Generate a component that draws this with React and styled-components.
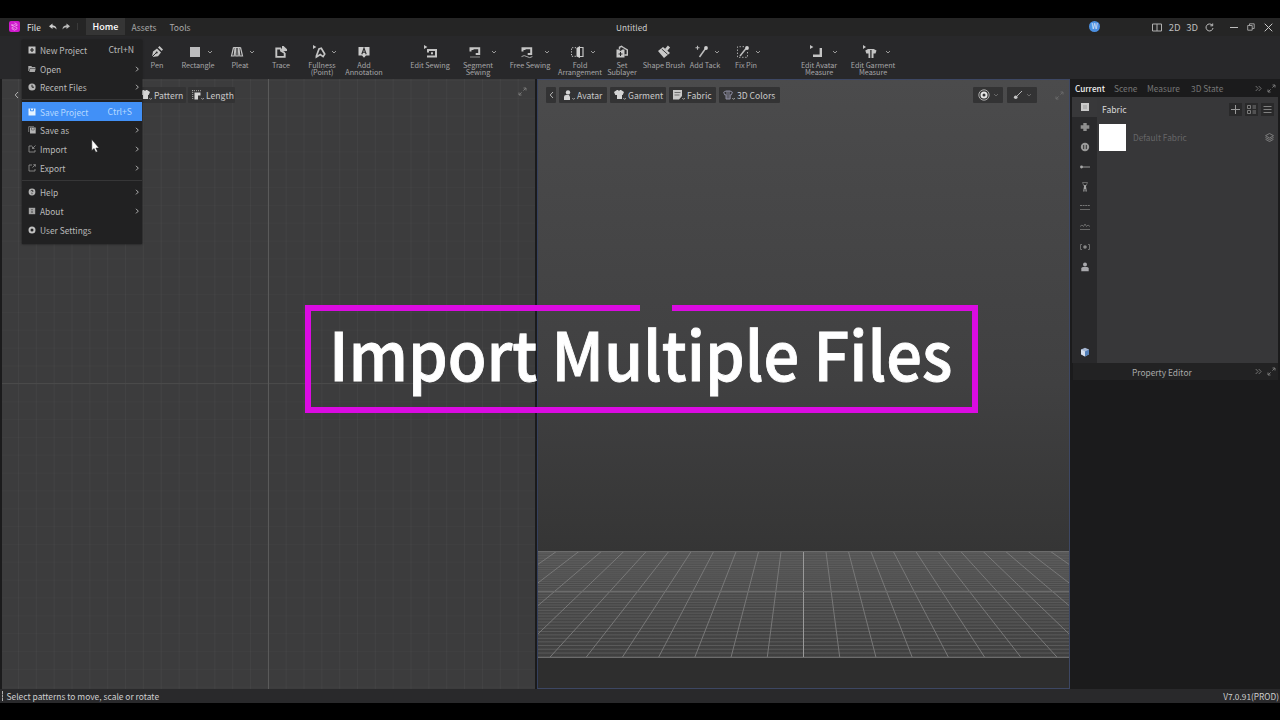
import React from "react";
import styled, { createGlobalStyle } from "styled-components";

const Global = createGlobalStyle`
  * { box-sizing: border-box; }
  body { margin: 0; background: #000; }
`;

const Screen = styled.div`
  position: relative;
  width: 1280px;
  height: 720px;
  overflow: hidden;
  padding: 18px 0 17px;
  background: #000;
  color: #c4c4c4;
  font-family: "Noto Sans CJK SC", "Open Sans", sans-serif;
  font-size: 8.3px;
  line-height: 10px;
  white-space: nowrap;
`;

const Window = styled.div`
  height: 685px;
  display: flex;
  flex-direction: column;
  background: #1b1b1c;
`;

/* ---------- title bar ---------- */

const TitleBar = styled.header`
  position: relative;
  height: 18px;
  flex: none;
  display: flex;
  align-items: center;
  background: #252525;
  padding: 0 0 1px 9px;
`;

const FileLabel = styled.span`
  margin: 0 8px 0 7px;
  width: 14px;
  color: #e0e0e0;
`;

const HistoryButtons = styled.div`
  display: flex;
  gap: 5px;
  width: 29px;
  border-right: 1px solid #3a3a3a;
  height: 7px;
  align-items: center;
`;

const MainTab = styled.div`
  display: flex;
  align-items: center;
  justify-content: center;
  height: 17px;
  width: ${(p) => p.$w}px;
  color: ${(p) => (p.$active ? "#fff" : "#a8a8a8")};
  background: ${(p) => (p.$active ? "#353535" : "transparent")};
  font-size: ${(p) => (p.$active ? 9 : 8.5)}px;
  font-weight: ${(p) => (p.$active ? 500 : 400)};
`;

const DocTitle = styled.div`
  margin-left: 419px;
  width: 34px;
  font-size: 8.2px;
  color: #cfcfcf;
`;

const UserBadge = styled.div`
  margin-left: 439px;
  width: 11px;
  height: 11px;
  border-radius: 50%;
  background: #4b8fe0;
  color: #e6f0ff;
  font-size: 7px;
  text-align: center;
  line-height: 11px;
`;

const WindowTools = styled.div`
  display: flex;
  align-items: center;
  margin-left: auto;
  padding: 1px 7px 0 0;
  color: #bdbdbd;
  font-size: 9.5px;
`;

const ToolSlot = styled.span`
  display: flex;
  justify-content: center;
  width: ${(p) => p.$w || 17.5}px;
`;

/* ---------- ribbon ---------- */

const Ribbon = styled.div`
  height: 43px;
  flex: none;
  display: flex;
  background: #28282a;
  padding: 9px 0 0 137px;
`;

const Tool = styled.div`
  width: 40px;
  flex: none;
  margin-left: ${(p) => p.$gap || 0}px;
  display: flex;
  flex-direction: column;
  align-items: center;
`;

const ToolIcons = styled.div`
  width: 40px;
  height: 14px;
  display: flex;
  align-items: center;
  gap: ${(p) => p.$space || 5}px;
  padding-left: ${(p) => (p.$menu ? 10 : 13)}px;
`;

const ToolLabel = styled.div`
  margin-top: 1px;
  color: #a6a6a8;
  font-size: 7.3px;
  line-height: 7.4px;
  letter-spacing: -0.05px;
  text-align: center;
  white-space: pre;
  padding-top: 2px;
`;

/* ---------- work area ---------- */

const Work = styled.div`
  flex: 1;
  min-height: 0;
  display: flex;
`;

const Pattern2D = styled.section`
  position: relative;
  margin-left: 2px;
  width: 533px;
  display: flex;
  justify-content: space-between;
  align-items: flex-start;
  background:
    linear-gradient(#5a5a5a 0 0) 266px 0 / 1px 100% no-repeat,
    linear-gradient(#4a4a4a 0 0) 0 304px / 100% 1px no-repeat,
    linear-gradient(90deg, #ffffff08 1px, transparent 1px) 16px 0 / 17.85px 100%,
    linear-gradient(#ffffff04 1px, transparent 1px) 0 1px / 100% 17.85px,
    #3c3c3d;
  padding: 8px 8px 0 12px;
`;

const View3D = styled.section`
  margin-left: 2px;
  width: 533px;
  display: flex;
  flex-direction: column;
  border: 1px solid #3d4763;
  border-left-color: #34405e;
  background: linear-gradient(#4b4b4c 0, #404041 50%, #353535 472px, #2e2e2e 560px);
`;

const ViewTop = styled.div`
  height: 471px;
  display: flex;
  align-items: flex-start;
  padding: 7px 5px 0 8px;
`;

const Chips = styled.div`
  display: flex;
  gap: ${(p) => p.$gap}px;
  align-items: center;
`;

const Chip = styled.div`
  width: ${(p) => p.$w}px;
  height: 16px;
  display: flex;
  align-items: center;
  justify-content: ${(p) => (p.$center ? "center" : "flex-start")};
  gap: ${(p) => (p.$center ? 3 : 1)}px;
  padding-left: ${(p) => (p.$center ? 0 : p.$inset ?? 4)}px;
  background: ${(p) => (p.$plain ? "transparent" : "#333334")};
  color: #cacaca;
  font-size: 8.6px;
  border-radius: 1px;
`;

const Floor = styled.svg`
  display: block;
  flex: none;
`;

/* ---------- side panel ---------- */

const Side = styled.aside`
  margin-left: 2px;
  width: 208px;
  display: flex;
  flex-direction: column;
`;

const SideTabs = styled.div`
  display: flex;
  align-items: center;
  height: 18px;
  flex: none;
  padding: 0 4px 0 3px;
  color: #7b7b7b;
  font-size: 8.5px;
`;

const SideTab = styled.span`
  width: ${(p) => p.$w}px;
  color: ${(p) => (p.$active ? "#f2f2f2" : "#767676")};
  font-weight: ${(p) => (p.$active ? 500 : 400)};
  font-size: ${(p) => (p.$active ? 8.2 : 8.4)}px;
  padding-bottom: 1px;
`;

const SideBody = styled.div`
  display: flex;
  height: 266px;
  flex: none;
`;

const Rail = styled.nav`
  width: 25px;
  background: #29292b;
  display: flex;
  flex-direction: column;
  align-items: center;
`;

const RailItem = styled.div`
  width: 25px;
  height: 20px;
  padding-left: 1px;
  display: flex;
  align-items: center;
  justify-content: center;
  background: ${(p) => (p.$active ? "#38383a" : "transparent")};
  margin-top: ${(p) => p.$top || 0}px;
`;

const FabricPanel = styled.div`
  width: 181px;
  background: #373739;
  padding: 5px 4px 0 2px;
`;

const FabricHead = styled.div`
  display: flex;
  align-items: center;
  height: 14px;
  padding-left: 3px;
  color: #d8d8d8;
  font-size: 8.6px;
`;

const HeadButtons = styled.div`
  display: flex;
  gap: 3px;
  margin-left: auto;
`;

const SquareButton = styled.div`
  width: 13px;
  height: 13px;
  background: #29292a;
  display: flex;
  align-items: center;
  justify-content: center;
`;

const FabricRow = styled.div`
  display: flex;
  align-items: center;
  height: 27px;
  margin-top: 8px;
  color: #666668;
  font-size: 8.3px;
`;

const Swatch = styled.div`
  width: 27px;
  height: 27px;
  background: #fff;
  margin-right: 7px;
`;

const FabricName = styled.span`
  padding-bottom: 1px;
`;

const RowEnd = styled.div`
  margin-left: auto;
  display: flex;
`;

const PropertyHead = styled.div`
  display: flex;
  align-items: center;
  height: 17px;
  margin: 0 2px 0 1px;
  padding: 0 2px 0 59px;
  background: #222223;
  color: #a9a9a9;
  font-size: 8.4px;
`;

const PropertyTitle = styled.span`
  width: 123px;
`;

const StatusBar = styled.footer`
  height: 14px;
  flex: none;
  display: flex;
  align-items: center;
  justify-content: space-between;
  background: #29292b;
  padding: 0 1px 1px 2px;
  color: #cfcfcf;
  font-size: 8.45px;
`;

const StatusText = styled.span`
  display: flex;
  align-items: center;
  gap: 3.5px;
`;

const Grip = styled.i`
  height: 10px;
  border-left: 1px dashed #b0b0b0;
`;

const Version = styled.span`
  font-size: 8.3px;
`;

/* ---------- file menu ---------- */

const Menu = styled.div`
  position: absolute;
  left: 22px;
  top: 40px;
  width: 120px;
  height: 204px;
  padding-top: 0.6px;
  background: #212122;
  box-shadow: 0 0 2px #161616;
`;

const MenuItem = styled.div`
  height: 18.7px;
  display: flex;
  align-items: center;
  padding: 0 2px 0 6px;
  color: ${(p) => (p.$active ? "#b7d9ff" : "#bababa")};
  background: ${(p) => (p.$active ? "#4190f7" : "transparent")};
  font-size: 8.4px;
`;

const MenuLabel = styled.span`
  margin-left: 4px;
`;

const Shortcut = styled.span`
  margin-left: auto;
  margin-right: ${(p) => (p.$active ? 8 : 6)}px;
  font-size: 8.7px;
`;

const MenuArrow = styled.span`
  margin-left: auto;
  display: flex;
`;

const MenuRule = styled.div`
  height: 5.8px;
  display: flex;
  align-items: center;
  &::before {
    content: "";
    width: 100%;
    height: 1px;
    background: #363637;
  }
`;

const Pointer = styled.svg`
  position: absolute;
  left: 91px;
  top: 139px;
`;

/* ---------- caption ---------- */

const Caption = styled.div`
  position: absolute;
  left: 305px;
  top: 305px;
  width: 673px;
  height: 108px;
  border: solid #db0be2;
  border-width: 0 6px 6px;
`;

const CaptionTop = styled.div`
  display: flex;
  justify-content: space-between;
  height: 6px;
`;

const CaptionEdge = styled.div`
  width: ${(p) => p.$w}px;
  background: #db0be2;
`;

const CaptionText = styled.div`
  padding-left: 19px;
  height: 96px;
  color: #fff;
  font-size: 67px;
  font-weight: 500;
  line-height: 82px;
  -webkit-text-stroke: 0.9px #fff;
  transform: scaleX(0.942);
  transform-origin: 0 0;
`;

/* ---------- icons ---------- */

const glyphs = {
  pen: <><path d="M2 12 3 6.5 7 3.5l4 4-3 3.8zM8 2.5 9.5 1 13 4.6 11.7 6z" fill="#c6c6c6" /><path d="m2 12 4.4-4.4" stroke="#29292a" /><circle cx="6.7" cy="7.4" r="1" fill="#29292a" /></>,
  rect: <path d="M2 2h10v10H2z" fill="#bcbcbe" />,
  pleat: <path d="M3.5 2.5h7M3.5 2.5 1.5 11h2.7L5 3M5.8 3v8h2.4V3M9 3l.8 8h2.7l-2-8.5" fill="none" stroke="#c0c0c0" strokeWidth="1.2" />,
  trace: <><path d="M7 3.5H2.3v8.4h8.4V8M7 3.5v2.2L10.7 8" fill="none" stroke="#c4c4c4" strokeWidth="1.9" /><path d="M8 1h1.6L13 4.3V6L8 6.3z" fill="#c4c4c4" /></>,
  full: <><path d="m1 0 3.4 2L1 4z" fill="#c4c4c4" /><path d="M4.4 11 7 4l2.3-.7L12.7 9l-1.6 2.6L8.3 9.5 4.4 12z" fill="none" stroke="#c4c4c4" strokeWidth="1.7" /></>,
  note: <><path d="M1.5 2h11v8.5H9L7 12.8 5 10.5H1.5z" fill="#cbcbcb" /><path d="m4.8 9.2 2.2-6 2.2 6M5.5 7.3h3" fill="none" stroke="#29292a" strokeWidth="1.1" /></>,
  editsew: <><path d="m1 0 3.4 2L1 4z" fill="#c4c4c4" /><path d="M5 5h8v6.5H4M5 4v3.5M8 8.3h2" fill="none" stroke="#c4c4c4" strokeWidth="2" /></>,
  segsew: <><path d="M2.5 6.5V3.2h8.7V9H7.7M4.5 3v2" fill="none" stroke="#c4c4c4" strokeWidth="2" /><path d="M2 12h10" stroke="#888" /></>,
  freesew: <><path d="M2.5 6.5V3.2h8.7V9H7.7M4.5 3v2" fill="none" stroke="#c4c4c4" strokeWidth="2" /><path d="M1.5 11.6q2.7-2 5.4 0t5.5 0" stroke="#aaa" fill="none" /></>,
  fold: <><path d="M6.5 3 10 1v12l-3.5-1.5z" fill="#d0d0d0" /><path d="M10 2.5h3v9h-3" fill="none" stroke="#c4c4c4" strokeWidth="1.2" /><path d="M6 2.7H1.5v8.6H6" fill="none" stroke="#c4c4c4" strokeWidth="1" strokeDasharray="1.2 1.5" /></>,
  sub: <><path d="M1.5 4.5h2L5.5 6l2-1.5h2V12.5h-8z" fill="#c8c8c8" /><path d="M4.5 4.5V2.3l2-1 1.8 1.2L12.3 5v5h-3" fill="none" stroke="#c4c4c4" strokeWidth="1.4" /><path d="M5.5 7v4M3.5 9h4" stroke="#29292a" /></>,
  brush: <><path d="m1 6 5-4 7 6-6 5z" fill="#c8c8c8" /><path d="m9 5 3-3.4" stroke="#c8c8c8" strokeWidth="3" /><path d="m4.7 4 6 5.4" stroke="#39393a" strokeWidth="1" /></>,
  tack: <><path d="m4.5 12 6-8.5" stroke="#bdbdbd" strokeWidth="1.5" /><circle cx="11" cy="3" r="1.9" fill="#cfcfcf" /><path d="M2.5.7v4M.5 2.7h4" stroke="#bbb" strokeWidth="1.1" /></>,
  pin: <><path d="m4 11 6-7.5" stroke="#bdbdbd" strokeWidth="1.5" /><circle cx="11" cy="3" r="1.9" fill="#cfcfcf" /><path d="M8 1.7H1.5v10.6h10V6" fill="none" stroke="#aaa" strokeDasharray="1.4 1.7" /></>,
  avm: <><path d="m1 0 3.4 2L1 4z" fill="#c4c4c4" /><path d="M11.8 3v7.8H4" fill="none" stroke="#c4c4c4" strokeWidth="2.4" /></>,
  gam: <><path d="m0 0 3 2-3 2z" fill="#c4c4c4" /><path d="M2.3 5.5 5 4h5.7l2.8 1.5-1 3h-2V13h-5V8.5H3.3z" fill="#c4c4c4" /><path d="M7.9 5v8" stroke="#29292a" strokeWidth="1.3" /></>,
};

const Icon = ({ name }) => <svg width="14" height="14" viewBox="0 0 14 14" style={{ flex: "none" }}>{glyphs[name]}</svg>;

const Chevron = ({ color = "#9a9a9a" }) => (
  <svg width="6" height="6" viewBox="0 0 6 6"><path d="m1 2 2 2 2-2" fill="none" stroke={color} /></svg>
);

const Arrow = ({ left }) => (
  <svg width="5" height="8" viewBox="0 0 5 8">
    <path d={left ? "M4 1 1.2 4 4 7" : "m1 1.8 2.3 2.3L1 6.4"} fill="none" stroke="#b2b2b2" />
  </svg>
);

const Expand = ({ color = "#777" }) => (
  <svg width="9" height="9" viewBox="0 0 9 9">
    <path d="M5.5 1H8v2.5M8 1 5.4 3.6M3.5 8H1V5.5M1 8l2.6-2.6" fill="none" stroke={color} />
  </svg>
);

const DoubleArrow = () => (
  <svg width="7" height="7" viewBox="0 0 7 7"><path d="m.7 1 2.4 2.5L.7 6M3.7 1l2.4 2.5L3.7 6" fill="none" stroke="#858585" strokeWidth=".8" /></svg>
);

const shirt = "M0 2 3 0h1l1 1 1-1h1l3 2-1.3 3H8v4H3V5H1.3z";

const chipGlyphs = {
  avatar: <><circle cx="5" cy="2.4" r="2.2" fill="#d5d5d5" /><path d="M1 10V6.8Q1 5 3 5h3l1 2v3z" fill="#d5d5d5" /></>,
  shirt: <path d={shirt} fill="#d5d5d5" />,
  fabric: <><path d="M0 0h9v6L6 9.5H0z" fill="#c8c8c8" /><path d="M1.5 2.5h6M1.5 5h5" stroke="#555" strokeWidth=".8" /></>,
  colors: <path d="M.7 2.2 3 1h4l2.4 1.2-1 2.6H7.2V9H3V4.8H1.6zM4 1v8M6 1v8" fill="none" stroke="#9494aa" strokeWidth=".9" />,
  length: <><path d="M0 .7h9M.7 0v10" stroke="#aaa" strokeDasharray="1 1" /><path d="M2.5 2.5H8.5V5.5H6v4H2.5z" fill="#d5d5d5" /></>,
};

const ChipIcon = ({ name }) => (
  <svg width="13" height="11" viewBox="0 0 13 11">{chipGlyphs[name]}<path d="m9.3 8 1.3 1.4L11.9 8" fill="none" stroke="#aaa" strokeWidth=".9" /></svg>
);

const menuGlyphs = {
  plus: <><path d="M.5.5h7v7h-7z" fill="#c2c2c2" /><path d="M4 2v4M2 4h4" stroke="#222" strokeWidth="1.2" /></>,
  folder: <path d="M.3 1h3l.8 1h3.2v1H2L.9 6 .3 6zM2.2 3.6h5.6L6.8 7H1.2z" fill="#aaa" />,
  clock: <><circle cx="4" cy="4" r="3.6" fill="#b5b5b5" /><path d="M4 1.8v2.4h2" fill="none" stroke="#222" /></>,
  save: <><path d="M.5.5h7v7h-7z" fill="#e6f3ff" /><path d="M2.5.5v2.3h3V.5" fill="none" stroke="#4190f7" /></>,
  saveas: <><path d="M2 1.5h5.7v6H2z" fill="#b5b5b5" /><path d="M.7 6V.7H6M3.5 2v2h2.7V2" stroke="#777" fill="none" /></>,
  import: <path d="M4 1H1v6h6V5M7.5.5 4.5 3.5M4.5 1.5v2h2" fill="none" stroke="#8a8a8a" strokeWidth=".9" />,
  export: <path d="M4 1H1v6h6V5M4.5 3.5l3-3M5.3.7h2v2" fill="none" stroke="#8a8a8a" strokeWidth=".9" />,
  help: <><circle cx="4" cy="4" r="3.4" fill="#b5b5b5" /><path d="M3 3.2q0-1 1-1t1 1L4 4.3M4 5.2v1" fill="none" stroke="#222" strokeWidth=".9" /></>,
  about: <><path d="M.8.8h6.4v6.4H.8z" fill="#a5a5a5" /><path d="M4 2v1M4 3.7V6" stroke="#444" /></>,
  gear: <circle cx="4" cy="4" r="2.5" fill="none" stroke="#c2c2c2" strokeWidth="2" />,
};

const MenuGlyph = ({ name }) => <svg width="8" height="8" viewBox="0 0 8 8">{menuGlyphs[name]}</svg>;

const railGlyphs = {
  fabric: <><path d="M1 1h8v8H1z" fill="#c9c9c9" /><path d="M3 4h4M3 6h4" stroke="#999" /></>,
  cross: <path d="M3.3 1h3.4v2.3H9.3v3.4H6.7V9H3.3V6.7H.7V3.3h2.6z" fill="#8f8f8f" />,
  button: <><circle cx="5" cy="5" r="4.2" fill="#9a9a9a" /><path d="M3.7 3v4M6.3 3v4" stroke="#333" /></>,
  pin: <><path d="M1 5h9" stroke="#999" /><circle cx="1.5" cy="5" r="1.4" fill="#aaa" /></>,
  zip: <><path d="M2.5.5h5L6 4H4z" fill="none" stroke="#777" strokeWidth=".8" /><path d="M4.2 3h1.6l1 6.5H5.5V7h-1v2.5H3.2z" fill="#a5a5a5" /></>,
  stitch: <><path d="M0 3.5h10" stroke="#777" strokeDasharray="2 .6" /><path d="M0 7.5h10" stroke="#686868" /></>,
  wave: <><path d="M0 4.5 2 3l1.5 1.5L5 2l1.5 2.5L8 3l2 1.5" fill="none" stroke="#777" strokeWidth=".8" /><path d="M0 7.5h10" stroke="#686868" /></>,
  bracket: <><path d="M2 2.5H.5v5H2M8 2.5h1.5v5H8" fill="none" stroke="#777" strokeWidth=".9" /><circle cx="5" cy="5" r="1.8" fill="#888" /></>,
  person: <><circle cx="5" cy="2.5" r="2" fill="#a9a9ad" /><path d="M1.3 9.3V6.5Q1.3 5 3 5h4q1.7 0 1.7 1.5v2.8z" fill="#a9a9ad" /></>,
  cube: <><path d="M5 .7 9 2.5v4.7L5 9.5 1 7.2V2.5z" fill="#a6b7d3" /><path d="M5 4.5v5L1 7.2V2.5z" fill="#d5deec" /><path d="M5 9.5v-5l4-2v4.7z" fill="#5380b9" /></>,
};

const RailGlyph = ({ name }) => <svg width="10" height="10" viewBox="0 0 10 10">{railGlyphs[name]}</svg>;

/* ---------- data ---------- */

const tools = [
  { icon: "pen", label: "Pen" },
  { icon: "rect", label: "Rectangle", gap: 1, menu: true },
  { icon: "pleat", label: "Pleat", gap: 2, menu: true },
  { icon: "trace", label: "Trace", gap: 1 },
  { icon: "full", label: "Fullness\n(Point)", gap: 1, menu: true },
  { icon: "note", label: "Add\nAnnotation", gap: 2 },
  { icon: "editsew", label: "Edit Sewing", gap: 26 },
  { icon: "segsew", label: "Segment\nSewing", gap: 8, menu: true, space: 9 },
  { icon: "freesew", label: "Free Sewing", gap: 12, menu: true, space: 10 },
  { icon: "fold", label: "Fold\nArrangement", gap: 10, menu: true, space: 6 },
  { icon: "sub", label: "Set\nSublayer", gap: 2 },
  { icon: "brush", label: "Shape Brush", gap: 2 },
  { icon: "tack", label: "Add Tack", gap: 1, menu: true },
  { icon: "pin", label: "Fix Pin", gap: 1, menu: true },
  { icon: "avm", label: "Edit Avatar\nMeasure", gap: 33, menu: true, space: 9 },
  { icon: "gam", label: "Edit Garment\nMeasure", gap: 14, menu: true, space: 8 },
];

const menuGroups = [
  [["plus", "New Project", "Ctrl+N"], ["folder", "Open"], ["clock", "Recent Files"]],
  [["save", "Save Project", "Ctrl+S", true], ["saveas", "Save as"], ["import", "Import"], ["export", "Export"]],
  [["help", "Help"], ["about", "About"], ["gear", "User Settings", ""]],
];

const rail = ["fabric", "cross", "button", "pin", "zip", "stitch", "wave", "bracket", "person"];

const floorRows = Array.from({ length: 43 }, (_, i) => 278 / (1 + i * 0.0144) - 172);
const floorCols = Array.from({ length: 33 }, (_, i) => i - 16);

const FloorGrid = () => (
  <Floor width="531" height="107" viewBox="0 0 531 107">
    <defs>
      <linearGradient id="floor" x1="0" y1="0" x2="0" y2="1">
        <stop offset="0" stopColor="#505050" />
        <stop offset="1" stopColor="#404040" />
      </linearGradient>
    </defs>
    <rect width="531" height="107" fill="url(#floor)" />
    {floorRows.map((y) => <path key={y} d={`M0 ${y}H531`} stroke="#626262" strokeWidth=".8" />)}
    {floorCols.map((n) => (
      <path key={n} d={`M${265.5 + n * 22.4} 0 ${265.5 + n * 36.2} 106`} stroke={n ? "#7d7d7d" : "#999"} strokeWidth={n ? 0.9 : 1} />
    ))}
    <path d="M0 .5H531M0 40.5H531M0 106.5H531" stroke="#6c6c6c" />
  </Floor>
);

export default function App() {
  return (
    <Screen>
      <Global />
      <Window>
        <TitleBar>
          <svg width="11" height="11" viewBox="0 0 11 11">
            <rect width="11" height="11" rx="2" fill="#cf19cc" />
            <path d="M5.5 1.8 8 3.2v1.5L5.5 3.6 3.2 4.6 8 6.6v1.2L5.5 9.2 3 7.8V6.4l2.5 1.2M3 4.8V3.2z" fill="none" stroke="#f2b4f2" strokeWidth=".7" />
          </svg>
          <FileLabel>File</FileLabel>
          <HistoryButtons>
            <svg width="8" height="7" viewBox="0 0 8 7"><path d="M3.5.5 0 3.2 3.5 6V4.2Q6 4 7.5 6.5 7.5 2.5 3.5 2.2z" fill="#d0d0d0" /></svg>
            <svg width="8" height="7" viewBox="0 0 8 7"><path d="M4.5.5 8 3.2 4.5 6V4.2Q2 4 .5 6.5.5 2.5 4.5 2.2z" fill="#bdbdbd" /></svg>
          </HistoryButtons>
          <ToolSlot $w={8} />
          <MainTab $w={39} $active>Home</MainTab>
          <MainTab $w={38}>Assets</MainTab>
          <MainTab $w={34}>Tools</MainTab>
          <DocTitle>Untitled</DocTitle>
          <UserBadge>W</UserBadge>
          <WindowTools>
            <ToolSlot><svg width="10" height="9" viewBox="0 0 10 9"><path d="M.5 1h9v7h-9zM5 1v7" fill="none" stroke="#b0b0b0" /></svg></ToolSlot>
            <ToolSlot>2D</ToolSlot>
            <ToolSlot>3D</ToolSlot>
            <ToolSlot><svg width="9" height="9" viewBox="0 0 9 9"><path d="M7.3 2.3A3.5 3.5 0 1 0 8 5M7.7.5v2.3H5.4" fill="none" stroke="#bdbdbd" /></svg></ToolSlot>
            <ToolSlot $w={6.5} />
            <ToolSlot><svg width="8" height="9" viewBox="0 0 8 9"><path d="M0 4.5h8" stroke="#bdbdbd" /></svg></ToolSlot>
            <ToolSlot><svg width="8" height="8" viewBox="0 0 8 8"><path d="M.7 2.5h4.5v4.7H.7zM2.5 2.5V.8h4.7v4.7h-2" fill="none" stroke="#aaa" strokeWidth=".9" /></svg></ToolSlot>
            <ToolSlot $w={4} />
            <ToolSlot $w={9}><svg width="9" height="9" viewBox="0 0 9 9"><path d="m.7.7 7.6 7.6M8.3.7.7 8.3" stroke="#c8c8c8" /></svg></ToolSlot>
          </WindowTools>
        </TitleBar>

        <Ribbon>
          {tools.map((t) => (
            <Tool key={t.label} $gap={t.gap}>
              <ToolIcons $menu={t.menu} $space={t.space}>
                <Icon name={t.icon} />
                {t.menu && <Chevron />}
              </ToolIcons>
              <ToolLabel>{t.label}</ToolLabel>
            </Tool>
          ))}
        </Ribbon>

        <Work>
          <Pattern2D>
            <Chips $gap={2}>
              <Arrow left />
              <Chip $w={115} $plain />
              <Chip $w={48} $inset={2}><ChipIcon name="shirt" />Pattern</Chip>
              <Chip $w={47} $inset={4}><ChipIcon name="length" />Length</Chip>
            </Chips>
            <Expand />
          </Pattern2D>

          <View3D>
            <ViewTop>
              <Chips $gap={3}>
                <Chip $w={10} $center><Arrow left /></Chip>
                <Chip $w={48}><ChipIcon name="avatar" />Avatar</Chip>
                <Chip $w={56}><ChipIcon name="shirt" />Garment</Chip>
                <Chip $w={47}><ChipIcon name="fabric" />Fabric</Chip>
                <Chip $w={61}><ChipIcon name="colors" />3D Colors</Chip>
              </Chips>
              <RowEnd>
                <Chips $gap={4}>
                  <Chip $w={30} $center>
                    <svg width="12" height="12" viewBox="0 0 12 12"><circle cx="6" cy="6" r="5.2" fill="none" stroke="#aaa" /><circle cx="6" cy="6" r="2.5" fill="none" stroke="#e5e5e5" strokeWidth="2" /></svg>
                    <Chevron color="#666" />
                  </Chip>
                  <Chip $w={30} $center>
                    <svg width="10" height="10" viewBox="0 0 10 10"><path d="M9 1 3 7" stroke="#b5b5b5" /><circle cx="2.7" cy="7.3" r="1.8" fill="#c5c5c5" /></svg>
                    <Chevron color="#666" />
                  </Chip>
                  <Chip $w={10} $plain />
                  <Expand color="#686868" />
                </Chips>
              </RowEnd>
            </ViewTop>
            <FloorGrid />
          </View3D>

          <Side>
            <SideTabs>
              <SideTab $w={39} $active>Current</SideTab>
              <SideTab $w={33}>Scene</SideTab>
              <SideTab $w={44}>Measure</SideTab>
              <SideTab $w={64}>3D State</SideTab>
              <DoubleArrow />
              <RowEnd><Expand /></RowEnd>
            </SideTabs>
            <SideBody>
              <Rail>
                {rail.map((name, i) => (
                  <RailItem key={name} $active={i === 0}><RailGlyph name={name} /></RailItem>
                ))}
                <RailItem $top={65}><RailGlyph name="cube" /></RailItem>
              </Rail>
              <FabricPanel>
                <FabricHead>
                  Fabric
                  <HeadButtons>
                    <SquareButton><svg width="9" height="9" viewBox="0 0 9 9"><path d="M4.5 0v9M0 4.5h9" stroke="#999" /></svg></SquareButton>
                    <SquareButton><svg width="9" height="9" viewBox="0 0 9 9"><path d="M.5.5h3v3h-3zM.5 5.5h3v3h-3zM5.5 1H9M5.5 3H9M5.5 6H9M5.5 8H9" fill="none" stroke="#909090" strokeWidth=".8" /></svg></SquareButton>
                    <SquareButton><svg width="9" height="9" viewBox="0 0 9 9"><path d="M.5 1.5h8M.5 4.5h8M.5 7.5h8" stroke="#8a8a8a" strokeWidth=".9" /></svg></SquareButton>
                  </HeadButtons>
                </FabricHead>
                <FabricRow>
                  <Swatch />
                  <FabricName>Default Fabric</FabricName>
                  <RowEnd>
                    <svg width="9" height="9" viewBox="0 0 9 9"><path d="M4.5.5 8.5 2.7 4.5 5 .5 2.7zM.5 4.5l4 2.2 4-2.2M.5 6.3l4 2.2 4-2.2" fill="none" stroke="#858585" strokeWidth=".9" /></svg>
                  </RowEnd>
                </FabricRow>
              </FabricPanel>
            </SideBody>
            <PropertyHead>
              <PropertyTitle>Property Editor</PropertyTitle>
              <DoubleArrow />
              <RowEnd><Expand /></RowEnd>
            </PropertyHead>
          </Side>
        </Work>

        <StatusBar>
          <StatusText><Grip />Select patterns to move, scale or rotate</StatusText>
          <Version>V7.0.91(PROD)</Version>
        </StatusBar>
      </Window>

      <Menu>
        {menuGroups.map((group, i) => (
          <React.Fragment key={i}>
            {i > 0 && <MenuRule />}
            {group.map(([icon, label, keys, active]) => (
              <MenuItem key={label} $active={active}>
                <MenuGlyph name={icon} />
                <MenuLabel>{label}</MenuLabel>
                {keys === undefined ? <MenuArrow><Arrow /></MenuArrow> : <Shortcut $active={active}>{keys}</Shortcut>}
              </MenuItem>
            ))}
          </React.Fragment>
        ))}
      </Menu>
      <Pointer width="9" height="14" viewBox="0 0 9 14">
        <path d="M.8.5v11l2.3-2 1.7 3.7 1.7-.8L4.9 9H8z" fill="#fff" stroke="#222" strokeWidth=".5" />
      </Pointer>

      <Caption>
        <CaptionTop><CaptionEdge $w={329} /><CaptionEdge $w={300} /></CaptionTop>
        <CaptionText>Import Multiple Files</CaptionText>
      </Caption>
    </Screen>
  );
}
